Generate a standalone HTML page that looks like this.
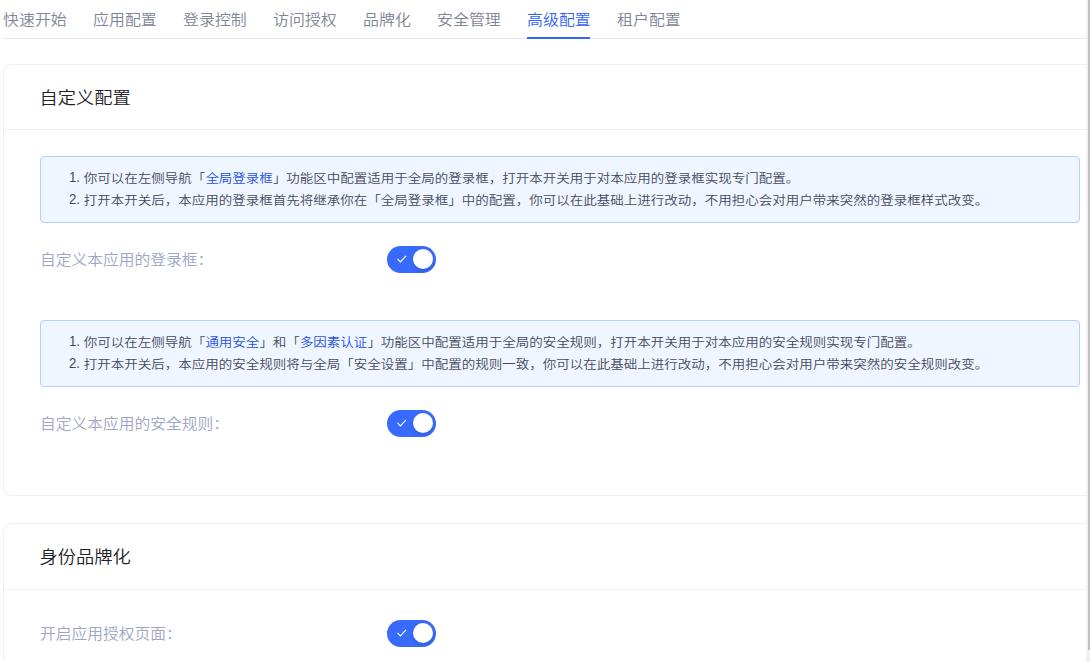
<!DOCTYPE html>
<html lang="zh-CN">
<head>
<meta charset="utf-8">
<title>高级配置</title>
<style>
*{box-sizing:border-box;margin:0;padding:0}
html,body{width:1090px;height:662px;overflow:hidden;background:#fff}
body{position:relative;font-family:"Liberation Sans","Noto Sans CJK SC",sans-serif;color:#282d3c}
.tabs{position:absolute;left:3px;top:0;width:1083px;height:39px;border-bottom:1px solid #e4e7ee}
.tab{position:absolute;top:9px;font-size:15.75px;line-height:22px;color:#7d8596;font-weight:350;white-space:nowrap;transform:scale(1.012,.945);transform-origin:0 80%}
.tab.active{color:#3063f8}
.ink{position:absolute;left:524px;top:37px;width:63px;height:2px;background:#3465fb}
.card{position:absolute;left:3px;width:1100px;border:1px solid #f0f0f0;border-radius:9px;background:#fff}
.card h2{transform-origin:0 4.3px;transform:translate(-.5px,.6px) scale(1.015,.95);position:absolute;left:36px;font-weight:350;font-size:18px;line-height:28px;color:#1f2329;white-space:nowrap}
.hr{position:absolute;left:0;width:1100px;height:1px;background:#f0f0f0}
.info{font-weight:350;position:absolute;left:40px;width:1040px;height:67px;border:1px solid #b5cfff;border-radius:4px;background:#f0f6ff;font-size:13.5px;line-height:22px;color:#434a60;padding:10px 0 0 28px;white-space:nowrap}
.info div{transform-origin:50% 16.7px;transform:translateY(1.1px) scaleY(.91)}
.info .n{display:inline-block;position:relative;top:-.7px;font-size:16.5px;line-height:0;transform:scaleX(.8);transform-origin:0 50%;margin-right:-2.67px}
.info a{color:#1d4fe8;text-decoration:none}
.label{font-weight:350;transform-origin:50% 10.9px;transform:scaleY(.95);position:absolute;left:40px;font-size:15.75px;line-height:24px;color:#9da6c5;white-space:nowrap}
.sw{position:absolute;left:387px;width:49px;height:27px;border-radius:14px;background:#396aff}
.sw i{position:absolute;right:3px;top:3.2px;width:20.3px;height:20.3px;border-radius:50%;background:#fff;box-shadow:0 2px 4px rgba(0,35,11,.17)}
.sw svg{position:absolute;left:9px;top:8px}
.track{position:absolute;left:1086px;top:0;width:4px;height:662px;background:#f1f1f1}
.thumb{position:absolute;left:1088px;top:0;width:2px;height:650px;background:#c1c1c1}
</style>
</head>
<body>
<div class="tabs">
  <span class="tab" style="left:0">快速开始</span>
  <span class="tab" style="left:90px">应用配置</span>
  <span class="tab" style="left:180px">登录控制</span>
  <span class="tab" style="left:270px">访问授权</span>
  <span class="tab" style="left:360px">品牌化</span>
  <span class="tab" style="left:434px">安全管理</span>
  <span class="tab active" style="left:524px">高级配置</span>
  <span class="tab" style="left:614px">租户配置</span>
  <div class="ink"></div>
</div>

<div class="card" style="top:64px;height:432px">
  <h2 style="top:19px">自定义配置</h2>
  <div class="hr" style="top:64px"></div>
</div>
<div class="info" style="top:156px">
  <div><span class="n">1.</span> 你可以在左侧导航「<a>全局登录框</a>」功能区中配置适用于全局的登录框，打开本开关用于对本应用的登录框实现专门配置。</div>
  <div><span class="n">2.</span> 打开本开关后，本应用的登录框首先将继承你在「全局登录框」中的配置，你可以在此基础上进行改动，不用担心会对用户带来突然的登录框样式改变。</div>
</div>
<div class="label" style="top:248px">自定义本应用的登录框：</div>
<div class="sw" style="top:246px"><svg width="12" height="10" viewBox="0 0 12 10"><path d="M1.5 4.8 L4.4 7.8 L10 1.8" fill="none" stroke="#fff" stroke-width="1.15"/></svg><i></i></div>

<div class="info" style="top:320px">
  <div><span class="n">1.</span> 你可以在左侧导航「<a>通用安全</a>」和「<a>多因素认证</a>」功能区中配置适用于全局的安全规则，打开本开关用于对本应用的安全规则实现专门配置。</div>
  <div><span class="n">2.</span> 打开本开关后，本应用的安全规则将与全局「安全设置」中配置的规则一致，你可以在此基础上进行改动，不用担心会对用户带来突然的安全规则改变。</div>
</div>
<div class="label" style="top:412px">自定义本应用的安全规则：</div>
<div class="sw" style="top:410px"><svg width="12" height="10" viewBox="0 0 12 10"><path d="M1.5 4.8 L4.4 7.8 L10 1.8" fill="none" stroke="#fff" stroke-width="1.15"/></svg><i></i></div>

<div class="card" style="top:523px;height:300px">
  <h2 style="top:19px">身份品牌化</h2>
  <div class="hr" style="top:65px"></div>
</div>
<div class="label" style="top:622px">开启应用授权页面：</div>
<div class="sw" style="top:620px"><svg width="12" height="10" viewBox="0 0 12 10"><path d="M1.5 4.8 L4.4 7.8 L10 1.8" fill="none" stroke="#fff" stroke-width="1.15"/></svg><i></i></div>

<div class="track"></div>
<div class="thumb"></div>
</body>
</html>
